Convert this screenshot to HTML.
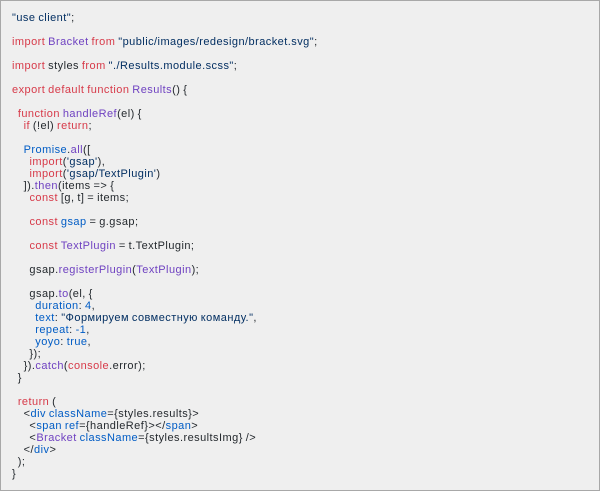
<!DOCTYPE html>
<html><head><meta charset="utf-8"><style>
html,body{margin:0;padding:0;background:#fff}
.box{position:absolute;left:0;top:0;width:598px;height:489px;border:1px solid #a8a8a8;background:#efefef}
pre{margin:0;position:absolute;left:11px;top:11px;font-family:"Liberation Sans",sans-serif;font-size:11px;letter-spacing:0.45px;word-spacing:-0.6px;line-height:12px;color:#24292e;white-space:pre}
.k{color:#d73a49}.f{color:#6f42c1}.p{color:#005cc5}.s{color:#032f62}
</style></head><body><div class="box"><pre><span class="s">"use client"</span>;

<span class="k">import</span> <span class="f">Bracket</span> <span class="k">from</span> <span class="s">"public/images/redesign/bracket.svg"</span>;

<span class="k">import</span> styles <span class="k">from</span> <span class="s">"./Results.module.scss"</span>;

<span class="k">export default function</span> <span class="f">Results</span>() {

  <span class="k">function</span> <span class="f">handleRef</span>(el) {
    <span class="k">if</span> (!el) <span class="k">return</span>;

    <span class="p">Promise</span>.<span class="f">all</span>([
      <span class="k">import</span>(<span class="s">'gsap'</span>),
      <span class="k">import</span>(<span class="s">'gsap/TextPlugin'</span>)
    ]).<span class="f">then</span>(items =&gt; {
      <span class="k">const</span> [g, t] = items;

      <span class="k">const</span> <span class="p">gsap</span> = g.gsap;

      <span class="k">const</span> <span class="f">TextPlugin</span> = t.TextPlugin;

      gsap.<span class="f">registerPlugin</span>(<span class="f">TextPlugin</span>);

      gsap.<span class="f">to</span>(el, {
        <span class="p">duration</span>: <span class="p">4</span>,
        <span class="p">text</span>: <span class="s">"Формируем совместную команду."</span>,
        <span class="p">repeat</span>: <span class="p">-1</span>,
        <span class="p">yoyo</span>: <span class="p">true</span>,
      });
    }).<span class="f">catch</span>(<span class="k">console</span>.error);
  }

  <span class="k">return</span> (
    &lt;<span class="p">div</span> <span class="p">className</span>={styles.results}&gt;
      &lt;<span class="p">span</span> <span class="p">ref</span>={handleRef}&gt;&lt;/<span class="p">span</span>&gt;
      &lt;<span class="f">Bracket</span> <span class="p">className</span>={styles.resultsImg} /&gt;
    &lt;/<span class="p">div</span>&gt;
  );
}</pre></div></body></html>
